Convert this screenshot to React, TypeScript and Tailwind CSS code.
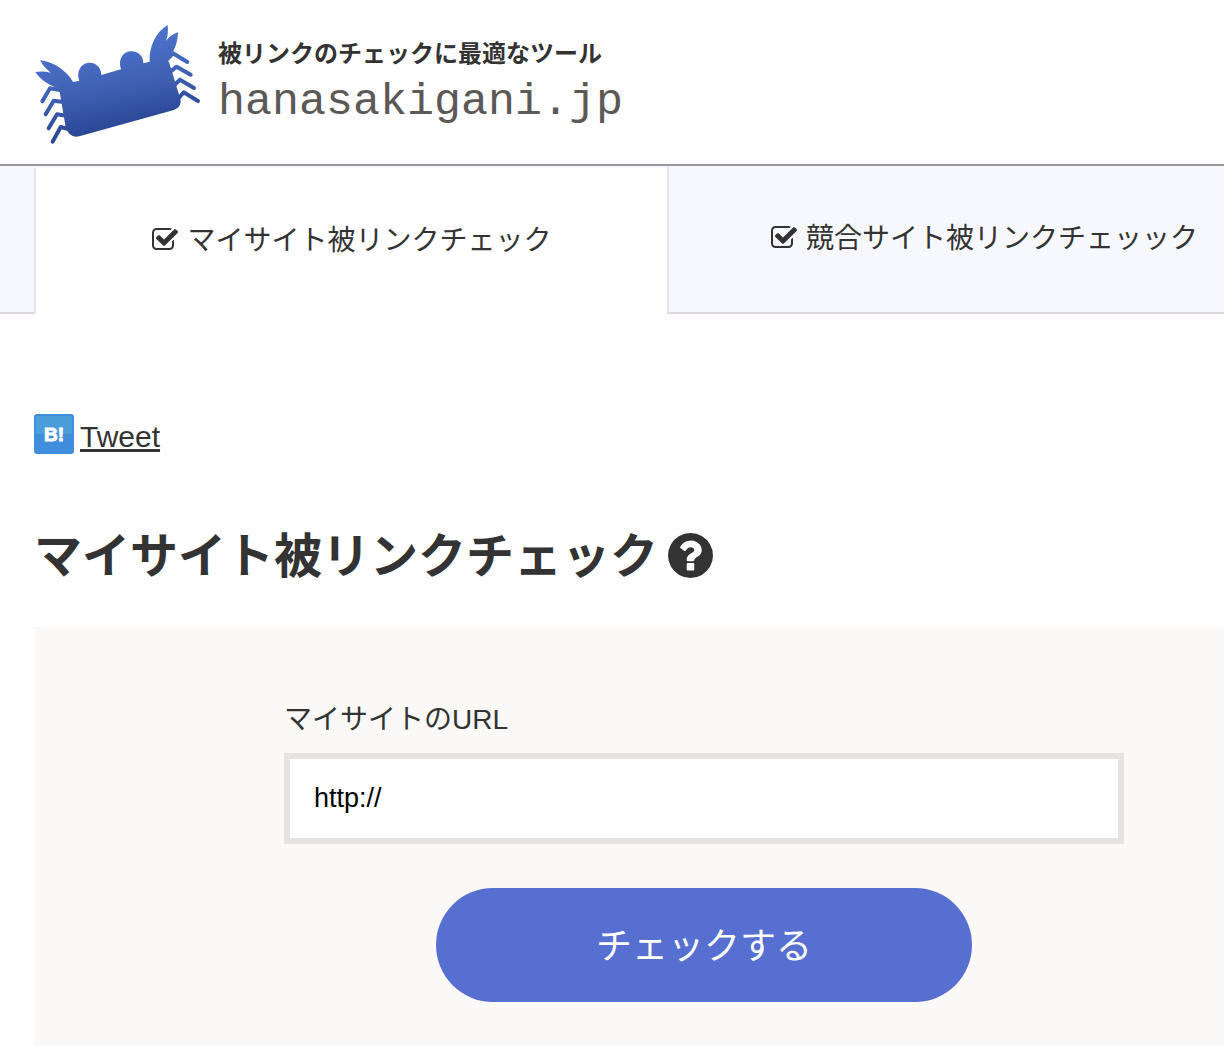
import type { ReactNode } from 'react'

function CrabLogo() {
  return (
    <svg viewBox="42 42 501 363" className="h-[121px] w-[167px] shrink-0" aria-hidden>
      <defs>
        <linearGradient id="crab" gradientUnits="userSpaceOnUse" x1="270" y1="110" x2="320" y2="370">
          <stop offset="0" stopColor="#4a70c8" />
          <stop offset="0.45" stopColor="#4060b4" />
          <stop offset="1" stopColor="#274390" />
        </linearGradient>
      </defs>
      <path
        fill="url(#crab)"
        d="M120 237 C92 228 62 211 46 186 Q68 182 92 188 Q72 173 60 151 C99 155 139 180 159 216 L178 212 C168 183 184 158 209 158 C231 158 244 175 244 195 L303 178 C293 148 309 124 334 124 C357 124 371 141 370 160 L389 155 C387 109 407 66 443 45 Q446 72 438 93 Q451 74 474 67 C473 100 461 131 440 150 L447 156 L482 270 Q484 293 462 300 L178 379 Q148 386 137 352 L117 234 Z"
      />
      <g fill="none" stroke="url(#crab)" strokeWidth="12" strokeLinecap="round" strokeLinejoin="round">
        <path d="M67 274 L90 235 L120 240" />
        <path d="M77 313 L101 272 L130 276" />
        <path d="M86 355 L111 313 L138 317" />
        <path d="M98 395 L122 351 L145 357" />
        <path d="M442 147 L459 130 L502 156" />
        <path d="M452 184 L470 170 L512 194" />
        <path d="M464 224 L480 209 L522 234" />
        <path d="M476 264 L491 247 L534 273" />
      </g>
    </svg>
  )
}

function CheckIcon() {
  return (
    <svg viewBox="0 0 1792 1792" fill="currentColor" className="size-7 shrink-0" aria-hidden>
      <path d="M1472 930v318q0 119-84.5 203.5t-203.5 84.5h-832q-119 0-203.5-84.5t-84.5-203.5v-832q0-119 84.5-203.5t203.5-84.5h832q63 0 117 25 15 7 18 23 3 17-9 29l-49 49q-10 10-23 10-3 0-9-2-23-6-45-6h-832q-66 0-113 47t-47 113v832q0 66 47 113t113 47h832q66 0 113-47t47-113v-254q0-13 9-22l64-64q10-10 23-10 6 0 12 3 20 8 20 29zm231-489l-814 814q-24 24-57 24t-57-24l-430-430q-24-24-24-57t24-57l110-110q24-24 57-24t57 24l263 263 647-647q24-24 57-24t57 24l110 110q24 24 24 57t-24 57z" />
    </svg>
  )
}

function HelpIcon() {
  return (
    <svg viewBox="128 128 1536 1536" fill="currentColor" className="size-[45px]" aria-hidden>
      <path d="M1024 1376v-192q0-14-9-23t-23-9h-192q-14 0-23 9t-9 23v192q0 14 9 23t23 9h192q14 0 23-9t9-23zm256-672q0-88-55.5-163t-138.5-116-170-41q-243 0-371 213-15 24 8 42l132 100q7 6 19 6 16 0 25-12 53-68 86-92 34-24 86-24 48 0 85.5 26t37.5 59q0 38-20 61t-68 45q-63 28-115.5 86.5t-52.5 125.5v36q0 14 9 23t23 9h192q14 0 23-9t9-23q0-19 21.5-49.5t54.5-49.5q32-18 49-28.5t46-35 44.5-48 28-60.5 12.5-81zm384 192q0 209-103 385.5t-279.5 279.5-385.5 103-385.5-103-279.5-279.5-103-385.5 103-385.5 279.5-279.5 385.5-103 385.5 103 279.5 279.5 103 385.5z" />
    </svg>
  )
}

function Tab({ className, children }: { className: string; children: ReactNode }) {
  return (
    <a
      href="#"
      className={`flex items-center gap-2 border-l-2 border-l-[#e4e4ec] text-[28px] leading-10 whitespace-nowrap ${className}`}
    >
      <CheckIcon />
      <span className="pt-0.5">{children}</span>
    </a>
  )
}

export default function App() {
  return (
    <div className="min-h-screen overflow-hidden bg-white font-['Liberation_Sans','Noto_Sans_CJK_JP',sans-serif] text-[#333]">
      <header className="border-b-2 border-[#999] pt-6 pb-[19px] pl-[34px]">
        <a href="#" className="flex gap-[17px]">
          <CrabLogo />
          <div className="pt-3">
            <p className="text-2xl leading-9 font-bold">被リンクのチェックに最適なツール</p>
            <p className="pt-1 font-['Liberation_Mono',monospace] text-[45px] leading-[54px] text-[#5c5856]">
              hanasakigani.jp
            </p>
          </div>
        </a>
      </header>

      <nav className="flex h-[148px] bg-[#f7f8fe]">
        <div className="w-[34px] shrink-0 border-b-2 border-[#ddd6de]" />
        <Tab className="mt-0.5 w-[633px] justify-center bg-white pb-0.5">マイサイト被リンクチェック</Tab>
        <Tab className="flex-1 justify-end border-b-2 border-b-[#ddd6de] pr-[26px] pb-0.5">
          競合サイト被リンクチェッック
        </Tab>
      </nav>

      <main className="pt-[100px] pl-[34px]">
        <div className="flex items-center gap-1.5">
          <a href="#" aria-label="はてなブックマーク">
            <svg viewBox="0 0 40 40" className="size-10" aria-hidden>
              <rect width="40" height="40" rx="3" fill="#3f8ddb" />
              <path d="M2 2h36v18H2z" fill="#4a9fdb" />
              <text x="20" y="27" textAnchor="middle" fill="#fff" stroke="#fff" strokeWidth="1" className="font-['Liberation_Sans',sans-serif] text-[19px] font-bold">
                B!
              </text>
            </svg>
          </a>
          <a href="#" className="pt-1.5 text-[30px] leading-[34px] underline">
            Tweet
          </a>
        </div>

        <div className="mt-[63px] flex items-center gap-2.5">
          <h1 className="pt-1 text-5xl leading-[72px] font-bold">マイサイト被リンクチェック</h1>
          <button type="button" aria-label="ヘルプ">
            <HelpIcon />
          </button>
        </div>

        <form className="mt-[34px] bg-[#faf9f7] pt-[73px] pr-[100px] pb-11 pl-[250px]">
          <label htmlFor="site-url" className="block text-[28px] leading-10">
            マイサイトのURL
          </label>
          <input
            id="site-url"
            type="text"
            defaultValue="http://"
            className="mt-[13px] block h-[91px] w-full border-6 border-[#e6e3e2] bg-white px-6 text-[27px] text-black"
          />
          <button
            type="button"
            className="mx-auto mt-11 block h-[114px] w-full max-w-[536px] rounded-full bg-[#566fd1] pt-1 text-4xl text-white"
          >
            チェックする
          </button>
        </form>
      </main>
    </div>
  )
}
